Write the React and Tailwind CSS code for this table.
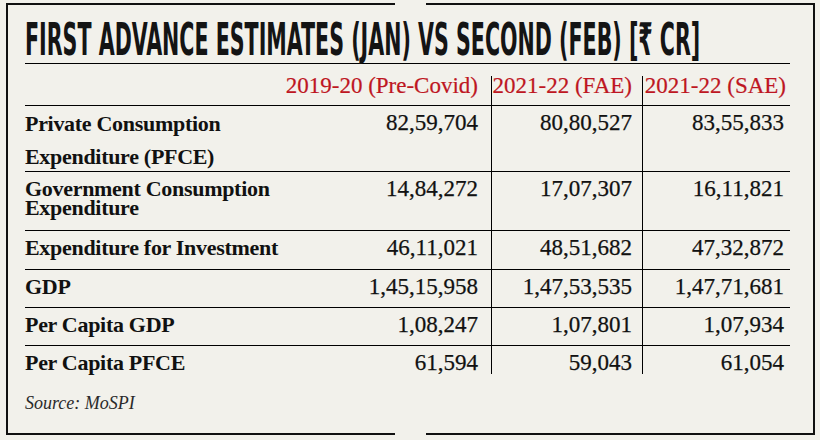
import React from 'react';

const rows = [
  {
    label: ['Private Consumption', 'Expenditure (PFCE)'],
    values: ['82,59,704', '80,80,527', '83,55,833'],
    height: 'h-[66px]',
    labelClass: 'leading-[33px] pt-[1px]',
  },
  {
    label: ['Government Consumption', 'Expenditure'],
    values: ['14,84,272', '17,07,307', '16,11,821'],
    height: 'h-[59px]',
    labelClass: 'leading-[19px] pt-[7px]',
  },
  { label: ['Expenditure for Investment'], values: ['46,11,021', '48,51,682', '47,32,872'], height: 'h-[39px]' },
  { label: ['GDP'], values: ['1,45,15,958', '1,47,53,535', '1,47,71,681'], height: 'h-[38px]' },
  { label: ['Per Capita GDP'], values: ['1,08,247', '1,07,801', '1,07,934'], height: 'h-[38px]' },
  { label: ['Per Capita PFCE'], values: ['61,594', '59,043', '61,054'], height: 'h-[26px]', last: true },
];

const headers = ['2019-20 (Pre-Covid)', '2021-22 (FAE)', '2021-22 (SAE)'];
const valuePad = ['pr-[13px]', 'pr-[10px] border-l border-black', 'pr-[6px] border-l border-black'];
const headPad = ['pr-[13px]', 'pr-[10px] border-l border-black', 'pr-[4px] border-l border-black'];

const FrameEdge = () => (
  <div className="flex h-[2px] shrink-0">
    <div className="w-[389px] bg-[#111]" />
    <div className="w-[31px]" />
    <div className="flex-1 bg-[#111]" />
  </div>
);

const DataRow = ({ row }) => (
  <div
    className={`grid grid-cols-[255px_211px_151px_148px] ${row.height} ${
      row.last ? '' : 'border-b border-black'
    }`}
  >
    <div
      className={`whitespace-nowrap tracking-[-0.3px] text-[22px] font-bold text-[#111] ${
        row.labelClass || 'leading-[22px] pt-[6px]'
      }`}
    >
      {row.label.map((line) => (
        <div key={line}>{line}</div>
      ))}
    </div>
    {row.values.map((v, i) => (
      <div
        key={i}
        className={`text-right text-[23px] leading-[22px] pt-[6px] text-[#111] [-webkit-text-stroke:0.25px_#111] ${valuePad[i]}`}
      >
        {v}
      </div>
    ))}
  </div>
);

export default function App() {
  return (
    <div className="w-[820px] h-[440px] bg-[#f2f1eb] pt-[3px] pl-[6px] font-['Liberation_Serif',serif] overflow-hidden">
      <div className="w-[809px] h-[432px] flex flex-col">
        <FrameEdge />
        <div className="flex-1 border-x-2 border-[#111] pl-[17px] pr-[23px]">
          <div className="h-[59px] pt-[12px] border-b border-black whitespace-nowrap">
            <div className="inline-block origin-left scale-x-[0.509] font-['DejaVu_Sans_Condensed','DejaVu_Sans',sans-serif] font-bold text-[45px] leading-[45px] text-[#141414]">
              FIRST ADVANCE ESTIMATES (JAN) VS SECOND (FEB) [₹ CR]
            </div>
          </div>

          <div className="grid grid-cols-[255px_211px_151px_148px] h-[42px] pt-[12px] border-b border-black">
            <div />
            {headers.map((h, i) => (
              <div
                key={h}
                className={`h-[29px] text-right text-[23px] leading-[20px] text-[#be1622] [-webkit-text-stroke:0.2px_#be1622] whitespace-nowrap ${headPad[i]}`}
              >
                {h}
              </div>
            ))}
          </div>

          {rows.map((row) => (
            <DataRow key={row.label[0]} row={row} />
          ))}

          <div className="mt-[21px] text-[18px] leading-[20px] italic text-[#2a2a2a]">Source: MoSPI</div>
        </div>
        <FrameEdge />
      </div>
    </div>
  );
}
